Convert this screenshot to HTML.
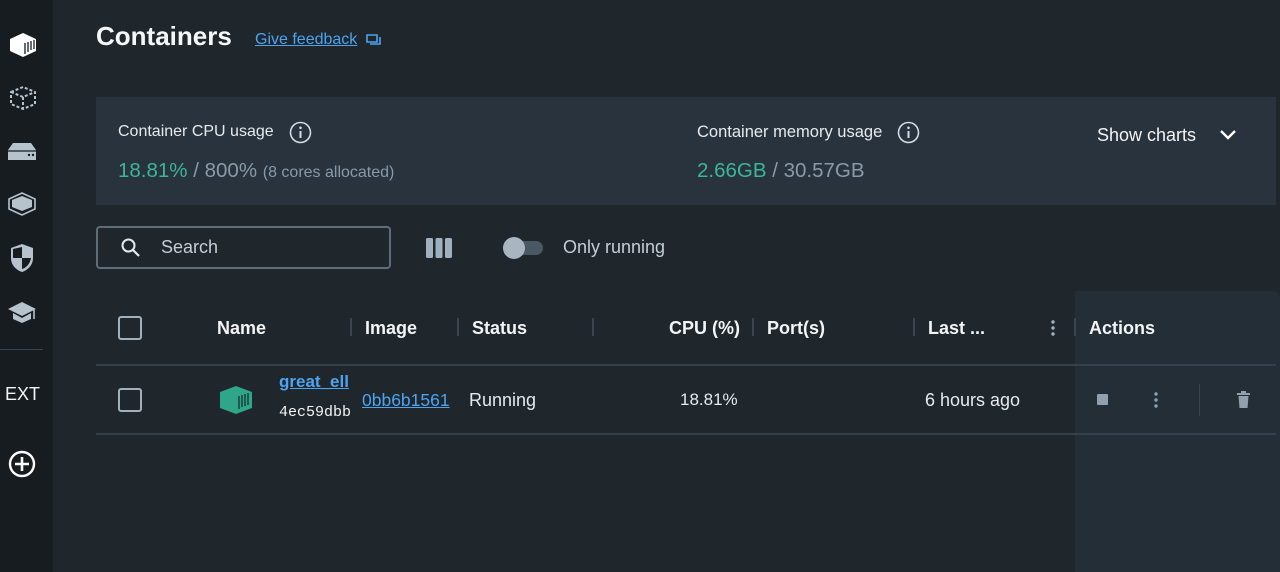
<!DOCTYPE html>
<html><head><meta charset="utf-8"><style>
*{margin:0;padding:0;box-sizing:border-box}
body{width:1280px;height:572px;overflow:hidden;background:#1f262c;font-family:"Liberation Sans",sans-serif;color:#e6eaee;position:relative}
.side{position:absolute;left:0;top:0;width:53px;height:572px;background:#171c20}
.a{position:absolute}
.t{white-space:nowrap}
.hd{font-weight:bold;font-size:18px;color:#f2f4f6}
.sep{position:absolute;width:2px;height:18px;background:#3a4550;top:318px}
</style></head><body>
<div class="side">
<svg class="a" style="left:8px;top:31px" width="30" height="28" viewBox="0 0 30 28"><path d="M2 8 L15 2 L28 8 L28 20 L15 26 L2 20Z" fill="#fff"/><path d="M17 12v11M20 11v10M23 10v9M26 9v9" stroke="#171c20" stroke-width="1.3"/></svg>
<svg class="a" style="left:8px;top:85px" width="30" height="26" viewBox="0 0 30 26"><path d="M3 7 L15 2 L27 7 L27 19 L15 24 L3 19Z M3 7 L15 12 L27 7 M15 12 V24" fill="none" stroke="#b6c2cc" stroke-width="2" stroke-dasharray="3 2"/></svg>
<svg class="a" style="left:7px;top:142px" width="30" height="20" viewBox="0 0 30 20"><path d="M6 1 H24 L29 8 V18 H1 V8Z" fill="#b6c2cc"/><path d="M1 9 H29" stroke="#171c20" stroke-width="1.2"/><circle cx="22" cy="13" r="1.2" fill="#171c20"/><circle cx="26" cy="13" r="1.2" fill="#171c20"/></svg>
<svg class="a" style="left:7px;top:191px" width="30" height="26" viewBox="0 0 30 26"><path d="M2 8 L15 2 L28 8 L28 18 L15 24 L2 18Z" fill="none" stroke="#b6c2cc" stroke-width="1.6"/><path d="M5 9 L15 5 L25 9 L25 16 L15 20 L5 16Z" fill="#b6c2cc"/></svg>
<svg class="a" style="left:9px;top:243px" width="26" height="30" viewBox="0 0 26 30"><path d="M13 1 L24 5 V15 C24 22 19 27 13 29 C7 27 2 22 2 15 V5Z" fill="#b6c2cc"/><path d="M13 4 V15 H4 V6Z M13 15 H22 C21 21 17 25 13 26Z" fill="#171c20"/></svg>
<svg class="a" style="left:7px;top:300px" width="30" height="24" viewBox="0 0 30 24"><path d="M1 9 L15 2 L29 9 L15 16Z" fill="#b6c2cc"/><path d="M6 13 V19 L15 23 L24 19 V13 L15 18Z" fill="#b6c2cc"/><path d="M27 10 V19" stroke="#b6c2cc" stroke-width="1.6"/></svg>
<div class="a" style="left:0;top:349px;width:43px;height:1px;background:#3a4550"></div>
<div class="a t" style="left:5px;top:384px;font-size:18px;color:#f2f4f6">EXT</div>
<svg class="a" style="left:8px;top:450px" width="28" height="28" viewBox="0 0 28 28"><circle cx="14" cy="14" r="12" fill="none" stroke="#fff" stroke-width="2.4"/><path d="M14 7V21M7 14H21" stroke="#fff" stroke-width="2.6"/></svg>
</div>
<div class="a t" style="left:96px;top:21px;font-size:26px;font-weight:bold;color:#f5f7f9">Containers</div>
<div class="a t" style="left:255px;top:31px;font-size:16px;color:#4ca4f0;text-decoration:underline">Give feedback</div>
<svg class="a" style="left:366px;top:34px" width="16" height="14" viewBox="0 0 16 14"><path d="M1 1H11V8H1Z M4 10H14V3" fill="none" stroke="#4ca4f0" stroke-width="1.6"/></svg>
<div class="a" style="left:96px;top:97px;width:1180px;height:108px;background:#28333d"></div>
<div class="a t" style="left:118px;top:123px;font-size:16px">Container CPU usage</div>
<svg class="a" style="left:289px;top:121px" width="23" height="23" viewBox="0 0 23 23"><circle cx="11.5" cy="11.5" r="10" fill="none" stroke="#d5dce2" stroke-width="1.6"/><path d="M11.5 10V17" stroke="#d5dce2" stroke-width="2"/><circle cx="11.5" cy="6.8" r="1.3" fill="#d5dce2"/></svg>
<div class="a t" style="left:118px;top:159px;font-size:20.5px;color:#8a9aa8"><span style="color:#3bb69a">18.81%</span> / 800% <span style="font-size:16px">(8 cores allocated)</span></div>
<div class="a t" style="left:697px;top:123px;font-size:16.5px">Container memory usage</div>
<svg class="a" style="left:897px;top:121px" width="23" height="23" viewBox="0 0 23 23"><circle cx="11.5" cy="11.5" r="10" fill="none" stroke="#d5dce2" stroke-width="1.6"/><path d="M11.5 10V17" stroke="#d5dce2" stroke-width="2"/><circle cx="11.5" cy="6.8" r="1.3" fill="#d5dce2"/></svg>
<div class="a t" style="left:697px;top:159px;font-size:20.5px;color:#8a9aa8"><span style="color:#3bb69a">2.66GB</span> / 30.57GB</div>
<div class="a t" style="left:1097px;top:125px;font-size:18px;color:#f2f4f6">Show charts</div>
<svg class="a" style="left:1219px;top:129px" width="18" height="12" viewBox="0 0 18 12"><path d="M2 2L9 9L16 2" fill="none" stroke="#fff" stroke-width="2.4"/></svg>
<div class="a" style="left:96px;top:226px;width:295px;height:43px;border:2px solid #5d6d7a;border-radius:4px"></div>
<svg class="a" style="left:120px;top:237px" width="22" height="22" viewBox="0 0 22 22"><circle cx="8.5" cy="8.5" r="6" fill="none" stroke="#e6eaee" stroke-width="2"/><path d="M13 13L19 19" stroke="#e6eaee" stroke-width="2.2"/></svg>
<div class="a t" style="left:161px;top:237px;font-size:18px;color:#c4ced6">Search</div>
<svg class="a" style="left:425px;top:237px" width="28" height="22"><rect x="1" y="1" width="7" height="20" rx="1.5" fill="#9fb0be"/><rect x="10.5" y="1" width="7" height="20" rx="1.5" fill="#9fb0be"/><rect x="20" y="1" width="7" height="20" rx="1.5" fill="#9fb0be"/></svg>
<div class="a" style="left:505px;top:241px;width:38px;height:14px;border-radius:7px;background:#4a5865"></div>
<div class="a" style="left:503px;top:237px;width:22px;height:22px;border-radius:11px;background:#a8b6c2"></div>
<div class="a t" style="left:563px;top:237px;font-size:18px;color:#c4ced6">Only running</div>
<div class="a" style="left:1075px;top:291px;width:205px;height:281px;background:#242e37;border-top-right-radius:6px"></div>
<div class="a" style="left:118px;top:316px;width:24px;height:24px;border:2px solid #9fb0be;border-radius:3px"></div>
<div class="a t hd" style="left:217px;top:318px">Name</div>
<div class="sep" style="left:350px"></div>
<div class="a t hd" style="left:365px;top:318px">Image</div>
<div class="sep" style="left:457px"></div>
<div class="a t hd" style="left:472px;top:318px">Status</div>
<div class="sep" style="left:592px"></div>
<div class="a t hd" style="left:669px;top:318px">CPU (%)</div>
<div class="sep" style="left:752px"></div>
<div class="a t hd" style="left:767px;top:318px">Port(s)</div>
<div class="sep" style="left:913px"></div>
<div class="a t hd" style="left:928px;top:318px">Last ...</div>
<svg class="a" style="left:1050px;top:319px" width="6" height="18"><circle cx="3" cy="3" r="1.7" fill="#9fb0be"/><circle cx="3" cy="9" r="1.7" fill="#9fb0be"/><circle cx="3" cy="15" r="1.7" fill="#9fb0be"/></svg>
<div class="sep" style="left:1074px"></div>
<div class="a t hd" style="left:1089px;top:318px">Actions</div>
<div class="a" style="left:96px;top:364px;width:1180px;height:2px;background:#34404b"></div>
<div class="a" style="left:118px;top:388px;width:24px;height:24px;border:2px solid #9fb0be;border-radius:3px"></div>
<svg class="a" style="left:219px;top:385px" width="34" height="30" viewBox="0 0 34 30"><path d="M1 7 L17 1 L33 7 L33 23 L17 29 L1 23Z" fill="#2fa68a"/><path d="M20 11v13M23 10v12M26 9v12M29 8v12" stroke="#173a33" stroke-width="1.4"/></svg>
<div class="a t" style="left:279px;top:372px;font-size:17px;font-weight:bold;color:#4ca4f0;text-decoration:underline;width:72px;overflow:hidden">great_ell</div>
<div class="a t" style="left:279px;top:404px;font-size:15px;color:#f2f4f6;font-family:'Liberation Mono',monospace;width:73px;overflow:hidden">4ec59dbb</div>
<div class="a t" style="left:362px;top:390px;font-size:17.5px;color:#4ca4f0;text-decoration:underline">0bb6b1561</div>
<div class="a t" style="left:469px;top:390px;font-size:18px">Running</div>
<div class="a t" style="left:680px;top:390px;font-size:17px">18.81%</div>
<div class="a t" style="left:925px;top:390px;font-size:18px">6 hours ago</div>
<div class="a" style="left:1097px;top:394px;width:11px;height:11px;background:#8fa0ae;border-radius:1px"></div>
<svg class="a" style="left:1153px;top:391px" width="6" height="18"><circle cx="3" cy="3" r="1.7" fill="#8fa0ae"/><circle cx="3" cy="9" r="1.7" fill="#8fa0ae"/><circle cx="3" cy="15" r="1.7" fill="#8fa0ae"/></svg>
<div class="a" style="left:1199px;top:384px;width:1px;height:32px;background:#3a4550"></div>
<svg class="a" style="left:1236px;top:391px" width="15" height="18" viewBox="0 0 15 18"><path d="M1 3H14M5 1H10" stroke="#8fa0ae" stroke-width="2"/><path d="M2.5 5H12.5L11.5 17H3.5Z" fill="#8fa0ae"/></svg>
<div class="a" style="left:96px;top:433px;width:1180px;height:2px;background:#34404b"></div>
</body></html>
